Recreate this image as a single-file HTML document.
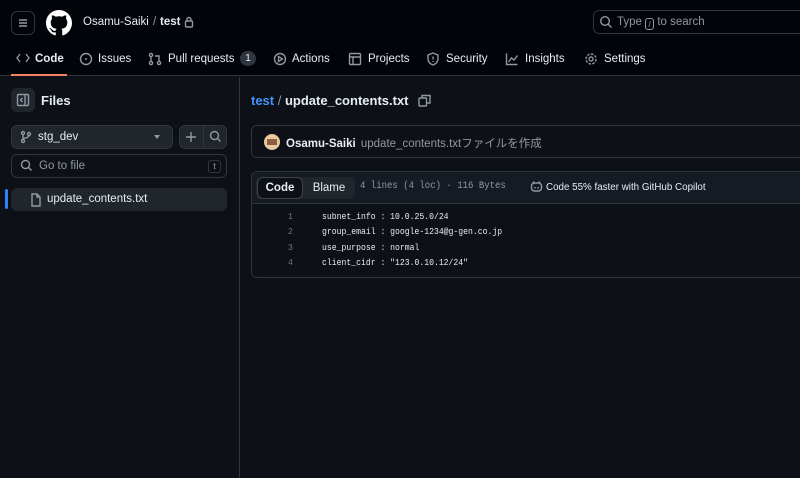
<!DOCTYPE html>
<html><head><meta charset="utf-8"><style>
*{box-sizing:border-box;margin:0;padding:0}
body{width:800px;height:478px;overflow:hidden;background:#0d1117;color:#e6edf3;font-family:"Liberation Sans","Noto Sans CJK JP",sans-serif;font-size:12px;position:relative}
.hdr{position:absolute;left:0;top:0;width:800px;height:76px;background:#010409;border-bottom:1px solid #30363d}
.abs{position:absolute}
.ic{stroke:#9198a1;fill:none;stroke-width:1.4}
.tab{position:absolute;top:53px;font-size:11.5px;color:#e6edf3}
.ti{position:absolute;top:52px}
.mono{font-family:"Liberation Mono",monospace}
</style></head><body>
<div class="hdr">
 <div class="abs" style="left:11px;top:11px;width:24px;height:24px;border:1px solid #30363d;border-radius:6px"></div>
 <svg class="abs" style="left:16px;top:16px" width="14" height="14"><path d="M3 4h8M3 7h8M3 10h8" class="ic"/></svg>
 <svg class="abs" style="left:46px;top:10px" width="26" height="26" viewBox="0 0 16 16"><path fill="#fff" d="M8 0C3.58 0 0 3.58 0 8c0 3.54 2.29 6.53 5.47 7.59.4.07.55-.17.55-.38 0-.19-.01-.82-.01-1.49-2.01.37-2.53-.49-2.69-.94-.09-.23-.48-.94-.82-1.13-.28-.15-.68-.52-.01-.53.63-.01 1.08.58 1.23.82.72 1.21 1.87.87 2.33.66.07-.52.28-.87.51-1.07-1.78-.2-3.64-.89-3.64-3.95 0-.87.31-1.59.82-2.15-.08-.2-.36-1.02.08-2.12 0 0 .67-.21 2.2.82.64-.18 1.32-.27 2-.27.68 0 1.36.09 2 .27 1.53-1.04 2.2-.82 2.2-.82.44 1.1.16 1.92.08 2.12.51.56.82 1.27.82 2.15 0 3.07-1.87 3.75-3.65 3.95.29.25.54.73.54 1.48 0 1.07-.01 1.93-.01 2.2 0 .21.15.46.55.38A8.013 8.013 0 0016 8c0-4.42-3.58-8-8-8z"/></svg>
 <div class="abs" style="left:83px;top:16px;font-size:11.5px;color:#e6edf3">Osamu-Saiki</div>
 <div class="abs" style="left:153px;top:16px;font-size:11.5px;color:#9198a1">/</div>
 <div class="abs" style="left:160px;top:16px;font-size:11.5px;font-weight:bold">test</div>
 <svg class="abs" style="left:184px;top:16px" width="10" height="12"><rect x="1.5" y="5" width="7" height="6" rx="1" class="ic" stroke="#e6edf3"/><path d="M3 5V3.5a2 2 0 014 0V5" class="ic" stroke="#e6edf3"/></svg>
 <div class="abs" style="left:593px;top:10px;width:220px;height:24px;border:1px solid #30363d;border-radius:6px"></div>
 <svg class="abs" style="left:599px;top:15px" width="14" height="14"><circle cx="6" cy="6" r="4.3" class="ic"/><path d="M9.2 9.2l3.3 3.3" class="ic"/></svg>
 <div class="abs" style="left:617px;top:16px;color:#9198a1;font-size:11.5px">Type <span style="display:inline-block;border:1px solid #9198a1;border-radius:3px;width:9px;height:12px;font-size:8px;text-align:center;line-height:11px;vertical-align:-2px">/</span> to search</div>

 <svg class="ti" style="left:16px" width="14" height="12"><path d="M4 2L1 6l3 4M10 2l3 4-3 4" class="ic"/></svg><div class="tab" style="left:35px;font-weight:bold">Code</div>
 <div class="abs" style="left:11px;top:74px;width:56px;height:2px;background:#f78166"></div>
 <svg class="ti" style="left:79px" width="14" height="14"><circle cx="7" cy="7" r="5.5" class="ic"/><circle cx="7" cy="7" r="1" fill="#9198a1"/></svg><div class="tab" style="left:98px">Issues</div>
 <svg class="ti" style="left:148px" width="14" height="14"><circle cx="3" cy="3" r="1.6" class="ic"/><circle cx="3" cy="11" r="1.6" class="ic"/><circle cx="11" cy="11" r="1.6" class="ic"/><path d="M3 4.6v4.8M11 9.4V4H7" class="ic"/></svg><div class="tab" style="left:168px">Pull requests</div>
 <div class="abs" style="left:240px;top:51px;width:16px;height:15px;background:#30363d;border-radius:8px;font-size:10px;text-align:center;line-height:15px">1</div>
 <svg class="ti" style="left:273px" width="14" height="14"><circle cx="7" cy="7" r="5.5" class="ic"/><path d="M5.5 4.5v5l4-2.5z" class="ic"/></svg><div class="tab" style="left:292px">Actions</div>
 <svg class="ti" style="left:348px" width="14" height="14"><rect x="1.5" y="1.5" width="11" height="11" rx="1" class="ic"/><path d="M1.5 5h11M5 5v7.5" class="ic"/></svg><div class="tab" style="left:368px">Projects</div>
 <svg class="ti" style="left:426px" width="14" height="14"><path d="M7 1l5 2v4c0 3-2.5 5-5 6-2.5-1-5-3-5-6V3z" class="ic"/><path d="M7 4.5v3M7 9v1" class="ic"/></svg><div class="tab" style="left:446px">Security</div>
 <svg class="ti" style="left:505px" width="14" height="14"><path d="M1.5 1.5v11h11M3.5 10l3-4 2.5 2 3.5-4.5" class="ic"/></svg><div class="tab" style="left:525px">Insights</div>
 <svg class="ti" style="left:584px" width="14" height="14"><circle cx="7" cy="7" r="2" class="ic"/><circle cx="7" cy="7" r="5" class="ic" stroke-dasharray="2.5 1.4"/></svg><div class="tab" style="left:604px">Settings</div>
</div>

<div class="abs" style="left:239px;top:77px;width:1px;height:401px;background:#30363d"></div>
<div class="abs" style="left:11px;top:88px;width:24px;height:24px;background:#21262d;border-radius:6px"></div>
<svg class="abs" style="left:16px;top:93px" width="14" height="14"><rect x="1.5" y="1.5" width="11" height="11" rx="1" class="ic"/><path d="M9 1.5v11M6.5 5L4.5 7l2 2" class="ic"/></svg>
<div class="abs" style="left:41px;top:93px;font-size:13px;font-weight:bold">Files</div>
<div class="abs" style="left:11px;top:125px;width:162px;height:24px;background:#21262d;border:1px solid #30363d;border-radius:6px"></div>
<svg class="abs" style="left:20px;top:130px" width="12" height="14"><circle cx="3" cy="3" r="1.5" class="ic"/><circle cx="3" cy="11" r="1.5" class="ic"/><circle cx="9" cy="4" r="1.5" class="ic"/><path d="M3 4.5v5M9 5.5c0 3-6 2-6 4" class="ic"/></svg>
<div class="abs" style="left:38px;top:131px;font-size:11.5px">stg_dev</div>
<div class="abs" style="left:154px;top:135px;border:3px solid transparent;border-top:4px solid #9198a1"></div>
<div class="abs" style="left:179px;top:125px;width:48px;height:24px;background:#21262d;border:1px solid #30363d;border-radius:6px"></div>
<div class="abs" style="left:203px;top:126px;width:1px;height:22px;background:#30363d"></div>
<svg class="abs" style="left:185px;top:131px" width="12" height="12"><path d="M6 1v10M1 6h10" class="ic"/></svg>
<svg class="abs" style="left:209px;top:130px" width="13" height="13"><circle cx="5.5" cy="5.5" r="4" class="ic"/><path d="M8.5 8.5l3 3" class="ic"/></svg>
<div class="abs" style="left:11px;top:154px;width:216px;height:24px;border:1px solid #30363d;border-radius:6px"></div>
<svg class="abs" style="left:20px;top:159px" width="13" height="13"><circle cx="5.5" cy="5.5" r="4" class="ic"/><path d="M8.5 8.5l3 3" class="ic"/></svg>
<div class="abs" style="left:39px;top:160px;color:#9198a1;font-size:11.5px">Go to file</div>
<div class="abs" style="left:208px;top:160px;width:13px;height:13px;border:1px solid #30363d;border-radius:3px;color:#9198a1;font-size:9px;text-align:center;line-height:11px">t</div>
<div class="abs" style="left:5px;top:189px;width:3px;height:20px;background:#2f81f7;border-radius:2px"></div>
<div class="abs" style="left:11px;top:188px;width:216px;height:23px;background:#21262d;border-radius:6px"></div>
<svg class="abs" style="left:30px;top:193px" width="12" height="14"><path d="M2 1h5l3 3v9H2z M7 1v3h3" class="ic"/></svg>
<div class="abs" style="left:47px;top:193px;font-size:11.5px">update_contents.txt</div>

<div class="abs" style="left:251px;top:93px;font-size:13px;font-weight:bold"><span style="color:#4493f8">test</span> <span style="color:#9198a1;font-weight:normal">/</span> update_contents.txt</div>
<svg class="abs" style="left:418px;top:94px" width="13" height="13"><rect x="1" y="4" width="7.5" height="8" rx="1" class="ic"/><path d="M4 4V1.5h8V9H8.5" class="ic"/></svg>
<div class="abs" style="left:251px;top:125px;width:600px;height:33px;border:1px solid #30363d;border-radius:6px"></div>
<div class="abs" style="left:264px;top:134px;width:16px;height:16px;border-radius:50%;background:#e9c9a0;overflow:hidden"><div style="margin:5px 3px 0;height:6px;background:#8a6040"></div></div>
<div class="abs" style="left:286px;top:135px;font-size:11.5px"><b>Osamu-Saiki</b> <span style="color:#9198a1;margin-left:2px">update_contents.txtファイルを作成</span></div>
<div class="abs" style="left:251px;top:171px;width:600px;height:107px;border:1px solid #30363d;border-radius:6px"></div>
<div class="abs" style="left:252px;top:172px;width:600px;height:32px;background:#151b23;border-bottom:1px solid #30363d;border-radius:6px 0 0 0"></div>
<div class="abs" style="left:256px;top:177px;width:51px;height:22px;background:#21262d;border-radius:6px"></div>
<div class="abs" style="left:257px;top:177px;width:46px;height:22px;background:#0d1117;border:1px solid #3d444d;border-radius:6px;text-align:center;line-height:20px;font-weight:bold;font-size:11.5px">Code</div>
<div class="abs" style="left:303px;top:177px;width:52px;height:22px;background:#21262d;border-radius:0 6px 6px 0;text-align:center;line-height:22px;font-size:11.5px">Blame</div>
<div class="abs mono" style="left:360px;top:181px;font-size:10px;color:#9198a1;transform:scaleX(0.9);transform-origin:0 0">4 lines (4 loc) · 116 Bytes</div>
<svg class="abs" style="left:530px;top:180px" width="13" height="13"><rect x="1.5" y="3" width="10" height="8" rx="3" class="ic"/><path d="M4 1.5l-1 2M9 1.5l1 2M5 7v1.5M8 7v1.5" class="ic"/></svg>
<div class="abs" style="left:546px;top:182px;font-size:9.8px">Code 55% faster with GitHub Copilot</div>
<div class="abs mono" style="left:288px;top:209px;font-size:9.6px;line-height:15.3px;white-space:pre;color:#e6edf3;transform:scaleX(0.845);transform-origin:0 0"><span style="color:#6e7681">1</span>      subnet_info : 10.0.25.0/24
<span style="color:#6e7681">2</span>      group_email : google-1234@g-gen.co.jp
<span style="color:#6e7681">3</span>      use_purpose : normal
<span style="color:#6e7681">4</span>      client_cidr : "123.0.10.12/24"</div>
</body></html>
